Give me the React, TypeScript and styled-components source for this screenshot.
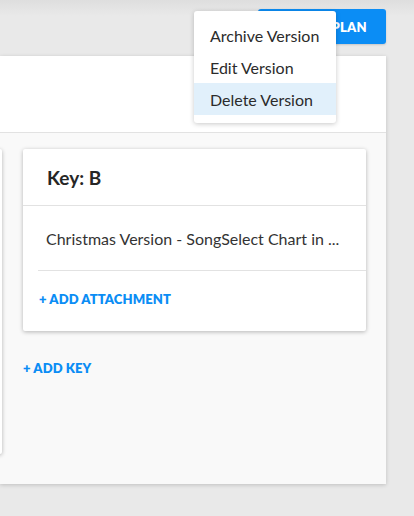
import React from "react";
import styled, { createGlobalStyle } from "styled-components";

const Global = createGlobalStyle`
  html, body {
    margin: 0;
    padding: 0;
  }
  body {
    background: #e9e9e9;
    font-family: Lato, "Open Sans", sans-serif;
    color: #333;
  }
`;

const Page = styled.div`
  width: 414px;
  height: 516px;
  overflow: hidden;
  background: linear-gradient(#dedede, #e9e9e9 16px);
  position: relative;
`;

const TopBar = styled.div`
  display: flex;
  justify-content: flex-end;
  padding: 9px 28px 0 0;
  height: 56px;
  box-sizing: border-box;
`;

const PrimaryButton = styled.button`
  width: 128px;
  height: 35px;
  border: none;
  border-radius: 3px;
  background: #0b8df5;
  color: #fff;
  font-family: Lato, sans-serif;
  font-weight: 800;
  font-size: 13px;
  letter-spacing: 0.2px;
  box-shadow: 0 1px 2px rgba(0, 0, 0, 0.15);
`;

const Panel = styled.section`
  width: 386px;
  height: 428px;
  background: #f9f9f9;
  box-shadow: 0 1px 4px rgba(0, 0, 0, 0.18);
  overflow: hidden;
`;

const PanelHeader = styled.div`
  height: 76px;
  background: #fff;
  border-bottom: 1px solid #e2e2e2;
`;

const Columns = styled.div`
  display: flex;
  gap: 21px;
  padding-top: 16px;
  margin-left: -341px;
`;

const Column = styled.div`
  display: flex;
  flex-direction: column;
  width: 343px;
  flex-shrink: 0;
`;

const Card = styled.div<{ $height?: number }>`
  background: #fff;
  border-radius: 2px;
  box-shadow: 0 1px 4px rgba(0, 0, 0, 0.28);
  ${(p) => (p.$height ? `height: ${p.$height}px;` : "")}
`;

const CardTitle = styled.h3`
  margin: 0;
  height: 56px;
  display: flex;
  align-items: center;
  padding: 0 24px;
  font-size: 19px;
  font-weight: 700;
  color: #262626;
  border-bottom: 1px solid #e2e2e2;
`;

const Attachment = styled.div`
  margin: 0 0 0 15px;
  height: 64px;
  display: flex;
  align-items: center;
  padding-left: 8px;
  font-size: 16px;
  color: #333;
  border-bottom: 1px solid #e2e2e2;
  white-space: nowrap;
`;

const LinkButton = styled.button<{ $size: number }>`
  border: none;
  background: none;
  padding: 0;
  color: #0b8df5;
  font-family: Lato, sans-serif;
  font-weight: 800;
  font-size: ${(p) => p.$size}px;
  text-align: left;
  letter-spacing: 0.1px;
`;

const CardFooter = styled.div`
  height: 56px;
  display: flex;
  align-items: center;
  padding: 0 0 4px 16px;
`;

const AddKeyRow = styled.div`
  padding-top: 26px;
`;

const Menu = styled.ul`
  position: absolute;
  top: 11px;
  left: 194px;
  width: 142px;
  margin: 0;
  padding: 8px 0;
  list-style: none;
  background: #fff;
  border-radius: 3px;
  box-shadow: 0 1px 5px rgba(0, 0, 0, 0.22);
`;

const MenuItem = styled.li<{ $active?: boolean }>`
  height: 32px;
  display: flex;
  align-items: center;
  padding-left: 16px;
  font-size: 16px;
  color: #2b2b2b;
  background: ${(p) => (p.$active ? "#e1f0fb" : "transparent")};
`;

export default function App() {
  return (
    <Page>
      <Global />
      <TopBar>
        <PrimaryButton>ADD TO PLAN</PrimaryButton>
      </TopBar>
      <Panel>
        <PanelHeader />
        <Columns>
          <Column>
            <Card $height={305} />
          </Column>
          <Column>
            <Card>
              <CardTitle>Key: B</CardTitle>
              <Attachment>Christmas Version - SongSelect Chart in ...</Attachment>
              <CardFooter>
                <LinkButton $size={13}>+ ADD ATTACHMENT</LinkButton>
              </CardFooter>
            </Card>
            <AddKeyRow>
              <LinkButton $size={13}>+ ADD KEY</LinkButton>
            </AddKeyRow>
          </Column>
        </Columns>
      </Panel>
      <Menu>
        <MenuItem>Archive Version</MenuItem>
        <MenuItem>Edit Version</MenuItem>
        <MenuItem $active>Delete Version</MenuItem>
      </Menu>
    </Page>
  );
}
